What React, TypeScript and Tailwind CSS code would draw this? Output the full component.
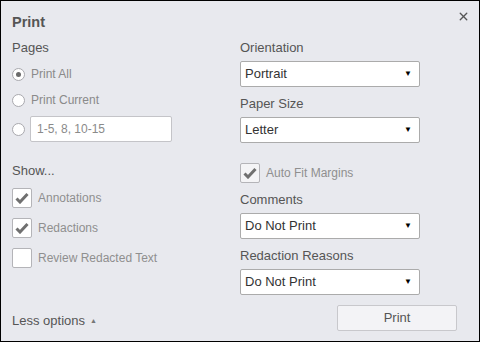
import { X } from "lucide-react";

function Radio({ checked, label }: { checked?: boolean; label?: string }) {
  return (
    <div className="flex items-center">
      <span className="flex h-[13px] w-[13px] items-center justify-center rounded-full border border-[#a9a9ae] bg-white">
        {checked && <span className="h-[5px] w-[5px] rounded-full bg-[#6b6b6b]" />}
      </span>
      {label && <span className="ml-[6px] text-[12px] text-[#8a8a8a]">{label}</span>}
    </div>
  );
}

function Check({ checked, label, dim }: { checked?: boolean; label: string; dim?: boolean }) {
  return (
    <div className="flex items-center">
      <span className={`flex h-[20px] w-[20px] items-center justify-center rounded-[2px] border border-[#b4b4b8] ${dim ? "bg-[#f4f4f6]" : "bg-white"}`}>
        {checked && (
          <svg width="14" height="12" viewBox="0 0 14 12">
            <path d="M1.5 6.5 L5 10 L12.5 2" fill="none" stroke="#707070" strokeWidth="3" strokeLinejoin="miter" />
          </svg>
        )}
      </span>
      <span className="ml-[6px] text-[12px] text-[#8f8f8f]">{label}</span>
    </div>
  );
}

function Select({ value }: { value: string }) {
  return (
    <div className="flex h-[26px] w-[180px] items-center justify-between rounded-[2px] border border-[#ababab] bg-white pl-[4px] pr-[7px]">
      <span className="text-[13px] text-[#333]">{value}</span>
      <span className="text-[8px] text-black">▼</span>
    </div>
  );
}

function Label({ children, className = "" }: { children: string; className?: string }) {
  return <div className={`flex h-[26px] items-center text-[13px] text-[#555] ${className}`}>{children}</div>;
}

export default function App() {
  return (
    <div
      className="flex h-[342px] w-[480px] flex-col border border-black bg-[#e8e9ee]"
      style={{ fontFamily: '"Liberation Sans", Arial, sans-serif' }}
    >
      <div className="flex h-[34px] items-start justify-between pl-[11px] pr-[9px]">
        <span className="mt-[13px] text-[14.5px] font-bold leading-[16px] text-[#555]">Print</span>
        <X className="mt-[9px] h-[13px] w-[13px] text-[#555]" strokeWidth={2.5} />
      </div>
      <div className="flex flex-1">
        <div className="flex w-[239px] flex-col pl-[11px]">
          <Label>Pages</Label>
          <div className="flex h-[26px] items-center"><Radio checked label="Print All" /></div>
          <div className="flex h-[26px] items-center"><Radio label="Print Current" /></div>
          <div className="flex h-[32px] items-center">
            <Radio />
            <div className="ml-[5px] flex h-[26px] w-[142px] items-center rounded-[2px] border border-[#c4c4c8] bg-white pl-[6px] text-[12px] text-[#8a8a8a]">
              1-5, 8, 10-15
            </div>
          </div>
          <Label className="mt-[14px] !h-[24px]">Show...</Label>
          <div className="flex h-[30px] items-center"><Check checked label="Annotations" /></div>
          <div className="flex h-[30px] items-center"><Check checked label="Redactions" /></div>
          <div className="flex h-[30px] items-center"><Check label="Review Redacted Text" /></div>
          <div className="mt-auto mb-[7px] flex h-[26px] items-center text-[13px] text-[#555]">
            Less options
            <span className="ml-[5px] text-[7px] text-[#777]">▲</span>
          </div>
        </div>
        <div className="flex flex-col">
          <Label>Orientation</Label>
          <Select value="Portrait" />
          <Label className="mt-[4px]">Paper Size</Label>
          <Select value="Letter" />
          <div className="mt-[16px] flex h-[28px] items-center"><Check checked dim label="Auto Fit Margins" /></div>
          <Label>Comments</Label>
          <Select value="Do Not Print" />
          <Label className="mt-[4px]">Redaction Reasons</Label>
          <Select value="Do Not Print" />
          <button className="ml-[97px] mt-[10px] flex h-[26px] w-[120px] items-center justify-center rounded-[2px] border border-[#c8c8cc] bg-[#f3f3f6] text-[13px] text-[#555]">
            Print
          </button>
        </div>
      </div>
    </div>
  );
}
